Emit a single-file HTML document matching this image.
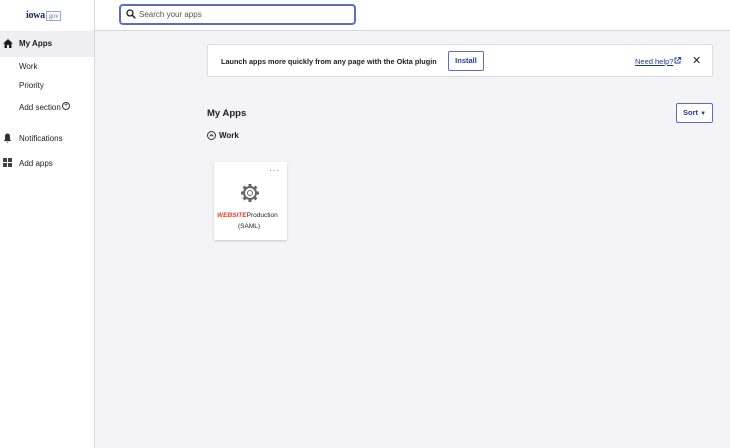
<!DOCTYPE html><html><head><style>
*{margin:0;padding:0;box-sizing:border-box}
body{width:730px;height:448px;overflow:hidden;background:#f4f4f6;font-family:"Liberation Sans",sans-serif;color:#1d1d21;position:relative;font-size:8px}
.side{position:absolute;left:0;top:0;width:95px;height:448px;background:#fff;border-right:1px solid #d7d7dc}
.hdr{position:absolute;left:95px;top:0;right:0;height:31px;background:#fff;border-bottom:1px solid #d7d7dc}
.abs{position:absolute}
</style></head><body>
<div class="side">
<div class="abs" style="left:26px;top:10px;font-family:'Liberation Serif',serif;font-weight:bold;font-size:10px;color:#1a2a5a;letter-spacing:-0.3px">iowa<span style="font-size:7px;font-weight:normal;color:#6b7bb0;border:1px solid #9aa6cc;padding:0 2px;margin-left:1px">gov</span></div>
<div class="abs" style="left:0;top:31px;width:94px;height:26px;background:#efeff1"></div>
<svg class="abs" style="left:3px;top:39px" width="10" height="9" viewBox="0 0 10 9"><path d="M5 0L0 4.5h1.5V9h2.5V6h2v3h2.5V4.5H10z" fill="#1d1d21"/></svg>
<div class="abs" style="left:19px;top:39px;font-weight:bold">My Apps</div>
<div class="abs" style="left:19px;top:62px">Work</div>
<div class="abs" style="left:19px;top:81px">Priority</div>
<div class="abs" style="left:19px;top:103px">Add section</div>
<div class="abs" style="left:62px;top:102px;width:8px;height:8px;border:1px solid #333;border-radius:50%;font-size:7px;line-height:6px;text-align:center">+</div>
<svg class="abs" style="left:3px;top:133px" width="9" height="10" viewBox="0 0 9 10"><path d="M4.5 0.5C2.5 .5 2 2 2 4v2.5L.5 8h8L7 6.5V4C7 2 6.5.5 4.5.5zM3.5 8.7h2a1 1 0 0 1-2 0z" fill="#333"/></svg>
<div class="abs" style="left:19px;top:134px">Notifications</div>
<svg class="abs" style="left:3px;top:158px" width="9" height="9"><rect x="0" y="0" width="4" height="4" fill="#444"/><rect x="5" y="0" width="4" height="4" fill="#444"/><rect x="0" y="5" width="4" height="4" fill="#444"/><rect x="5" y="5" width="4" height="4" fill="#444"/></svg>
<div class="abs" style="left:19px;top:159px">Add apps</div>
</div>
<div class="hdr"></div>
<div class="abs" style="left:119px;top:4px;width:237px;height:21px;border:2px solid #5b6dc0;border-radius:4px;background:#fff"></div>
<svg class="abs" style="left:126px;top:9px" width="10" height="10" viewBox="0 0 10 10"><circle cx="4" cy="4" r="3" stroke="#1d1d21" stroke-width="1.3" fill="none"/><path d="M6.2 6.2L9.3 9.3" stroke="#1d1d21" stroke-width="1.4"/></svg>
<div class="abs" style="left:139px;top:10px;color:#555">Search your apps</div>
<div class="abs" style="left:207px;top:44px;width:506px;height:33px;background:#fff;border:1px solid #dcdce0;border-radius:2px"></div>
<div class="abs" style="left:221px;top:57px;font-weight:bold;font-size:7.3px">Launch apps more quickly from any page with the Okta plugin</div>
<div class="abs" style="left:448px;top:51px;width:36px;height:20px;border:1px solid #5b6dc0;border-radius:2px;background:#fff;color:#1f3a93;font-weight:bold;font-size:7.5px;text-align:center;line-height:18px">Install</div>
<div class="abs" style="left:635px;top:57px;color:#1f3a93;text-decoration:underline;font-size:7.5px">Need help?</div>
<svg class="abs" style="left:674px;top:57px" width="7" height="7" viewBox="0 0 7 7"><path d="M3 1H1v5h5V4M4 .5h2.5V3M6.5.5L3 4" stroke="#1f3a93" stroke-width=".9" fill="none"/></svg>
<div class="abs" style="left:692px;top:54px;font-size:11px">✕</div>
<div class="abs" style="left:207px;top:108px;font-weight:bold;font-size:9.5px">My Apps</div>
<div class="abs" style="left:676px;top:103px;width:37px;height:20px;border:1px solid #5b6dc0;border-radius:2px;background:#fff;color:#1f3a93;font-weight:bold;font-size:7.5px;line-height:18px;padding-left:6px">Sort <span style="font-size:6px">▼</span></div>
<svg class="abs" style="left:207px;top:131px" width="9" height="9" viewBox="0 0 9 9"><circle cx="4.5" cy="4.5" r="4" stroke="#333" fill="none"/><path d="M2.7 5.3L4.5 3.5 6.3 5.3" stroke="#333" fill="none"/></svg>
<div class="abs" style="left:219px;top:131px;font-weight:bold">Work</div>
<div class="abs" style="left:214px;top:162px;width:73px;height:78px;background:#fff;border-radius:2px;box-shadow:0 1px 2px rgba(0,0,0,.18)"></div>
<div class="abs" style="left:269px;top:166px;color:#555;letter-spacing:1px">···</div>
<svg class="abs" style="left:240px;top:183px" width="20" height="20" viewBox="0 0 20 20"><g fill="#666"><circle cx="10" cy="10" r="7"/><g stroke="#666" stroke-width="3"><path d="M10 1v18M1 10h18M3.6 3.6l12.8 12.8M16.4 3.6L3.6 16.4"/></g></g><circle cx="10" cy="10" r="5" fill="#fff"/><circle cx="10" cy="10" r="3" fill="#666"/><circle cx="10" cy="10" r="2" fill="#fff"/></svg>
<div class="abs" style="left:217px;top:212px;font-size:6.5px"><i style="color:#e0412b;font-weight:bold">WEBSITE</i>Production</div>
<div class="abs" style="left:238px;top:223px;font-size:6.5px">(SAML)</div>
</body></html>
